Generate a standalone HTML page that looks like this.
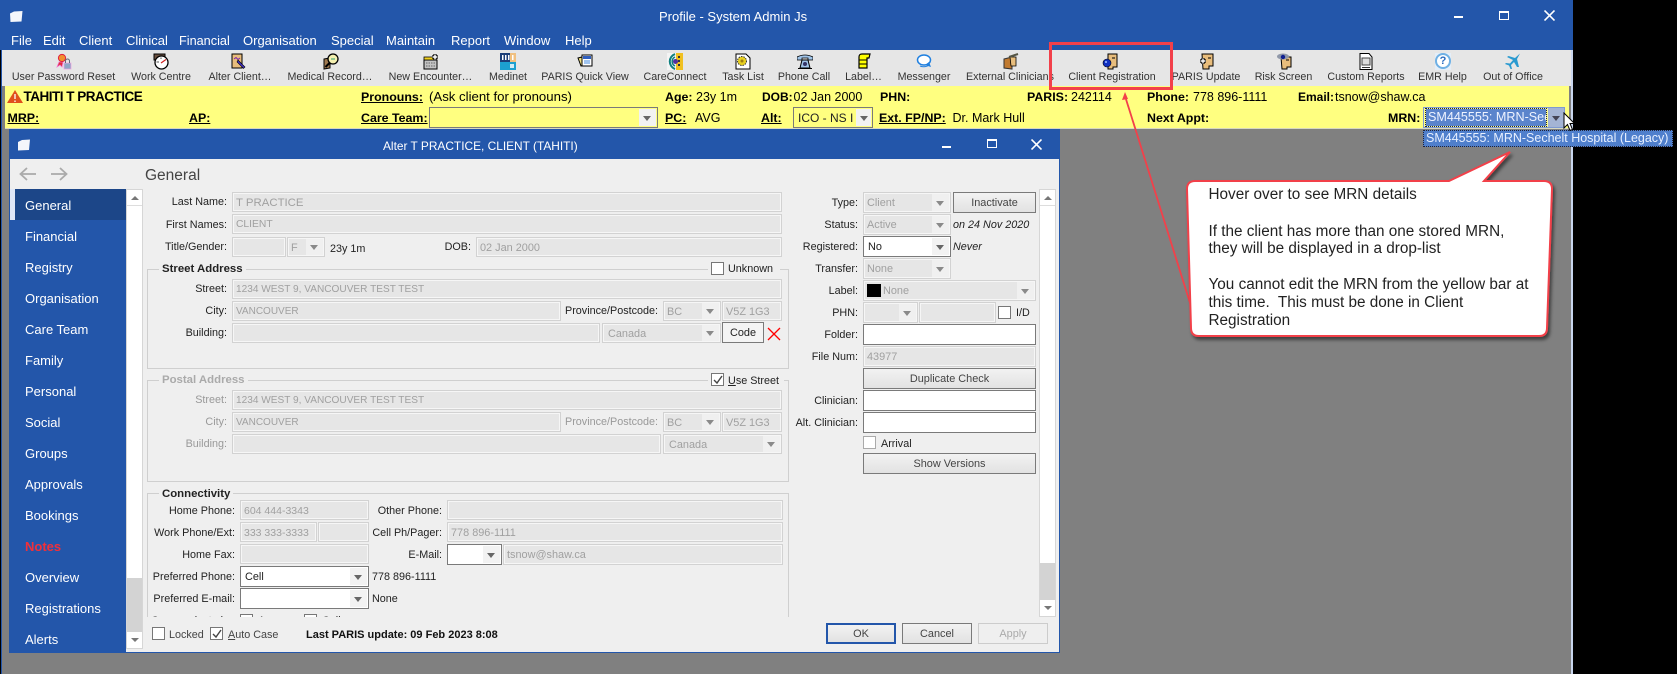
<!DOCTYPE html>
<html><head><meta charset="utf-8"><title>Profile - System Admin Js</title>
<style>
html,body{margin:0;padding:0;background:#000}
body{position:relative;width:1677px;height:674px;overflow:hidden;font-family:"Liberation Sans",Arial,sans-serif;font-size:10.8px;color:#222}
div,span,svg,i{position:absolute;box-sizing:border-box}
.t{white-space:nowrap;line-height:14px;margin-top:1px}
.r{transform:translateX(-100%)}
.g{color:#999}
.m{color:#fff;font-size:13px;top:34px;margin-top:0}
.tb{font-size:10.7px;top:70px;color:#333;transform:translateX(-50%);margin-top:0}
.ic{width:16px;height:17px;top:53px}
.y{font-size:12.5px;color:#000;margin-top:0}
.yb{font-size:12.4px;font-weight:bold;color:#000;margin-top:0}
.u{text-decoration:underline}
.n{left:25px;color:#fff;font-size:13px}
.f{background:#e6e6e6;border:1px solid #d2d2d2;box-shadow:inset 0 0 0 1px #f6f6f6;color:#a0a0a0;line-height:20px;padding-left:3px;white-space:nowrap;overflow:hidden;font-size:10.9px}
.w{background:#fff;border:1px solid #7a7a7a;color:#222;line-height:20px;padding-left:4px;white-space:nowrap;overflow:hidden;font-size:10.9px}
i{right:1px;top:1px;bottom:1px;width:17px;background:#f0f0f0}
i:after{content:"";position:absolute;left:4px;top:50%;margin-top:-2px;border:4px solid transparent;border-top:5px solid #8a8a8a;border-bottom:0}
.w i{background:#f2f2f2}.w i:after{border-top-color:#666}
.gb{border:1px solid #cfcfcf;left:147px;width:642px}
.lg{background:#efefef;padding:0 3px;font-weight:bold;font-size:11.4px;left:159px;color:#222}
.cb{width:13px;height:13px;background:#fff;border:1px solid #777}
.btn{background:linear-gradient(#f2f2f2,#e2e2e2);border:1px solid #7a7a7a;text-align:center;color:#444;line-height:21px;font-size:10.9px}
.sb{background:#fff;border:1px solid #d6d6d6}
.up,.dn{left:0;right:0;height:16px;background:#fff;border-bottom:1px solid #ddd}
.up:after,.dn:after{content:"";position:absolute;left:4px;top:6px;border:4px solid transparent}
.up:after{border-bottom:4px solid #777;border-top:0}
.dn:after{border-top:4px solid #777;border-bottom:0}
.c{font-size:15.3px;color:#222;left:1208.500px;margin-top:0}
</style></head><body>

<!-- main window -->
<div style="left:1px;top:0;width:1572px;height:674px;background:#808080;border-left:1px solid #2356aa;border-right:2px solid #c9d6ee"></div>
<div style="left:0;top:0;width:1573px;height:50px;background:#2356aa"></div>
<svg style="left:9px;top:10px" width="15" height="13" viewBox="0 0 15 13"><path d="M1 3.500 L5 1.500 L13.500 1 L12.500 11.500 L1.500 12 Z" fill="#f4f6fb"/></svg>
<div class="t" style="left:659px;top:10px;color:#fff;font-size:13px;margin-top:0">Profile - System Admin Js</div>
<div style="left:1454px;top:16px;width:9px;height:2px;background:#fff"></div>
<div style="left:1499px;top:11px;width:10px;height:9px;border:1px solid #fff;border-top-width:2px"></div>
<svg style="left:1544px;top:10px" width="11" height="11" viewBox="0 0 11 11"><path d="M.5 .5 L10.500 10.500 M10.500 .5 L.5 10.500" stroke="#fff" stroke-width="1.600"/></svg>

<div class="t m" style="left:11px">File</div>
<div class="t m" style="left:43px">Edit</div>
<div class="t m" style="left:79px">Client</div>
<div class="t m" style="left:126px">Clinical</div>
<div class="t m" style="left:179px;font-size:12.700px">Financial</div>
<div class="t m" style="left:243px">Organisation</div>
<div class="t m" style="left:331px">Special</div>
<div class="t m" style="left:386px">Maintain</div>
<div class="t m" style="left:451px">Report</div>
<div class="t m" style="left:504px">Window</div>
<div class="t m" style="left:565px">Help</div>

<!-- toolbar -->
<div style="left:2px;top:50px;width:1569px;height:36px;background:#e6e6e6"></div>

<svg class="ic" style="left:56px" viewBox="0 0 16 17"><path d="M3 9 L1 14 L4 12 L6 14 L7 9Z" fill="#e0303a" stroke="#f070d0" stroke-width=".7"/><circle cx="6" cy="5" r="3.600" fill="#f09030" stroke="#e02040"/><rect x="8" y="10" width="7" height="6" fill="#8fa8c8" stroke="#f0a0e0" stroke-width=".7"/><path d="M9.500 10 V8 A2 2 0 0 1 13.500 8 V10" fill="none" stroke="#667"/></svg>
<svg class="ic" style="left:153px" viewBox="0 0 16 17"><rect x="1" y="1" width="11" height="6" fill="#6a5040" stroke="#000"/><circle cx="8.500" cy="9.500" r="6.500" fill="#fff" stroke="#000" stroke-width="1.300"/><path d="M8 10 L13 6.500" stroke="#d02020" stroke-width="1.200"/><path d="M3.500 9 H6 M8 4.500 V6" stroke="#555"/></svg>
<svg class="ic" style="left:231px" viewBox="0 0 16 17"><rect x="1" y="1" width="10" height="14" fill="#e8bd7c" stroke="#000"/><path d="M3 6 L5 4.500 L7 6.500 L9 5" fill="none" stroke="#7a20b0"/><path d="M7 7 L14 14 L12.500 15.500 L6 9Z" fill="#4030c0" stroke="#000" stroke-width=".6"/></svg>
<svg class="ic" style="left:323px" viewBox="0 0 16 17"><path d="M1 6 L7 5 L7 15 L1 16Z" fill="#a07a50" stroke="#000"/><circle cx="10" cy="6" r="5" fill="#f4f0b0" stroke="#000" stroke-width="1.300"/><path d="M6.500 10 L2.500 14" stroke="#000" stroke-width="2"/><path d="M8 6 H12" stroke="#30a070"/></svg>
<svg class="ic" style="left:423px" viewBox="0 0 16 17"><rect x="1" y="7" width="13" height="9" fill="#c4c4c4" stroke="#000"/><rect x="1" y="4" width="11" height="3" fill="#f0d020" stroke="#000" stroke-width=".8"/><path d="M12 1 V7 M9 4 H15" stroke="#000" stroke-width="3.200"/><path d="M12 1.500 V6.500 M9.500 4 H14.500" stroke="#fff" stroke-width="1.500"/><path d="M3 10 H12 M3 13 H12" stroke="#666" stroke-dasharray="1.500 1"/></svg>
<svg class="ic" style="left:500px" viewBox="0 0 16 17"><rect x="0" y="0" width="16" height="9" fill="#1c3e78"/><rect x="10" y="0" width="6" height="9" fill="#f0c080"/><rect x="2" y="2" width="1.500" height="5" fill="#fff"/><rect x="5" y="2" width="1.500" height="5" fill="#fff"/><rect x="8" y="2" width="1.500" height="5" fill="#fff"/><rect x="12" y="2" width="1.500" height="5" fill="#fff"/><rect x="0" y="9" width="16" height="8" fill="#1ca0d0"/><rect x="10" y="11" width="4" height="4" fill="#d0ecf6"/></svg>
<svg class="ic" style="left:577px" viewBox="0 0 16 17"><path d="M1 5 L4 13 L8 12 L5 4Z" fill="#f0e080" stroke="#000"/><rect x="5" y="2" width="10" height="11" fill="#fff" stroke="#000"/><rect x="6" y="3" width="8" height="3" fill="#3060c0"/><rect x="7" y="7" width="6" height="4" fill="#a0c4f0"/></svg>
<svg class="ic" style="left:667px" viewBox="0 0 16 17"><rect x="0" y="0" width="16" height="17" fill="#f4f4f4"/><rect x="9" y="0" width="7" height="17" fill="#f0c020"/><path d="M8 1 A8 8 0 0 0 8 16" fill="none" stroke="#108080" stroke-width="2"/><path d="M8 4 A5 5 0 0 0 8 13" fill="none" stroke="#108080" stroke-width="1.500"/><circle cx="8.500" cy="8.500" r="2.500" fill="#5030a0"/><path d="M12 3 V14" stroke="#334" stroke-width="2" stroke-dasharray="2 2"/></svg>
<svg class="ic" style="left:735px" viewBox="0 0 16 17"><path d="M1 1 H11 L15 5 V16 H1Z" fill="#fff" stroke="#000"/><circle cx="7" cy="8" r="4.500" fill="#e8d020" stroke="#333" stroke-dasharray="1.500 1"/><circle cx="7" cy="8" r="1.500" fill="#a08010"/></svg>
<svg class="ic" style="left:797px" viewBox="0 0 16 17"><path d="M0 4 Q8 0 16 4 V7 H11 V5 H5 V7 H0Z" fill="#a0c4e8" stroke="#000" stroke-width=".8"/><path d="M3 15 L5 7 H11 L13 15Z" fill="#a0c4e8" stroke="#000"/><circle cx="8" cy="11" r="2" fill="#336"/><path d="M1 15.500 H15" stroke="#000"/></svg>
<svg class="ic" style="left:856px" viewBox="0 0 16 17"><path d="M3 4 Q3 1 6 1 H14 L13 5 H11 V15 H3Z" fill="#ffff00" stroke="#000" stroke-width="1.200"/><path d="M3 7 H11 M3 11 H11" stroke="#000"/></svg>
<svg class="ic" style="left:916px" viewBox="0 0 16 17"><ellipse cx="8" cy="7" rx="6.500" ry="5" fill="#fff" stroke="#2080e0" stroke-width="1.500"/><path d="M9 12 L15 14 L13 9Z" fill="#2080e0"/><path d="M4 13 Q9 15 13 12" fill="none" stroke="#2080e0"/></svg>
<svg class="ic" style="left:1003px" viewBox="0 0 16 17"><path d="M1 6 L9 4 V16 L1 15Z" fill="#c07a30" stroke="#333"/><path d="M7 4 H13 V13 H8Z" fill="#e8bd7c" stroke="#000" stroke-width=".8"/><path d="M6 4 L15 1" stroke="#554" stroke-width="2"/></svg>
<svg class="ic" style="left:1102px" viewBox="0 0 16 17"><path d="M6 1 H15 V14 H11 V16 H6Z" fill="#e8bd7c" stroke="#000"/><circle cx="5" cy="10" r="4" fill="#1030c0" stroke="#000" stroke-width=".6"/><circle cx="4" cy="9" r="1" fill="#a0c0ff"/><path d="M10 5 H13" stroke="#000"/></svg>
<svg class="ic" style="left:1198px" viewBox="0 0 16 17"><path d="M4 1 H15 V13 H11 V16 H5Z" fill="#e8bd7c" stroke="#000"/><path d="M5 5 V11 M2 8 H8" stroke="#000" stroke-width="3.200"/><path d="M5 5.500 V10.500 M2.500 8 H7.500" stroke="#fff" stroke-width="1.400"/><path d="M10 5 H13" stroke="#000"/></svg>
<svg class="ic" style="left:1276px" viewBox="0 0 16 17"><path d="M5 4 H15 V14 H11 V16 H6Z" fill="#e8bd7c" stroke="#000"/><ellipse cx="7" cy="3.500" rx="6" ry="3" fill="#9098a8"/><circle cx="7" cy="4" r="2.200" fill="#102090"/><path d="M10 7 H13" stroke="#000"/></svg>
<svg class="ic" style="left:1358px" viewBox="0 0 16 17"><path d="M2 .5 H11 L14 4 V16.500 H2Z" fill="#fff" stroke="#000"/><rect x="4" y="5" width="8" height="7" fill="#ddd" stroke="#444"/><path d="M4 14.500 H12" stroke="#333"/></svg>
<div style="left:1435px;top:53px;width:16px;height:17px;background:#e4eef8"></div>
<div style="left:1435px;top:53px;width:16px;height:16px;background:#fff;border:2px solid #6fb0e4;border-radius:50%;color:#2a6cc0;font-weight:bold;font-size:11px;line-height:12px;text-align:center">?</div>
<svg class="ic" style="left:1505px" viewBox="0 0 16 17"><path d="M15 .5 L12 6 L14 14 L12 14 L9 9 L6 12 L7 16 L5.500 16 L4 12.500 L0 11 L1 10 L5 10.500 L8 7 L2 4 L3.500 3 L10 5 Z" fill="#2a9ad0"/></svg>

<div class="t tb" style="left:63.500px">User Password Reset</div>
<div class="t tb" style="left:161px">Work Centre</div>
<div class="t tb" style="left:240px">Alter Client…</div>
<div class="t tb" style="left:330px">Medical Record…</div>
<div class="t tb" style="left:430.500px">New Encounter…</div>
<div class="t tb" style="left:508px">Medinet</div>
<div class="t tb" style="left:585px">PARIS Quick View</div>
<div class="t tb" style="left:675px">CareConnect</div>
<div class="t tb" style="left:743px">Task List</div>
<div class="t tb" style="left:804px">Phone Call</div>
<div class="t tb" style="left:863.500px">Label…</div>
<div class="t tb" style="left:924px">Messenger</div>
<div class="t tb" style="left:966px;transform:none">External Clinicians</div>
<div class="t tb" style="left:1112px">Client Registration</div>
<div class="t tb" style="left:1206px">PARIS Update</div>
<div class="t tb" style="left:1283.500px">Risk Screen</div>
<div class="t tb" style="left:1366px">Custom Reports</div>
<div class="t tb" style="left:1442.500px">EMR Help</div>
<div class="t tb" style="left:1513px">Out of Office</div>

<!-- yellow bar -->
<div style="left:5px;top:86px;width:1564px;height:43px;background:#ffff80;border-bottom:1px solid #d8d8c0"></div>
<svg style="left:7px;top:90px" width="16" height="13" viewBox="0 0 16 13"><path d="M8 0 L16 13 H0Z" fill="#e0501c"/><path d="M8 4 V9 M8 10.500 V12" stroke="#fff" stroke-width="1.300"/></svg>
<div class="t" style="left:23.500px;top:89.500px;font-size:13.500px;font-weight:bold;color:#000;letter-spacing:-.5px;margin-top:0">TAHITI T PRACTICE</div>
<div class="t yb u" style="left:361px;top:90px">Pronouns:</div>
<div class="t y" style="left:429px;top:90px;font-size:13.200px">(Ask client for pronouns)</div>
<div class="t yb" style="left:665px;top:90px">Age:</div>
<div class="t y" style="left:696px;top:90px">23y 1m</div>
<div class="t yb" style="left:762px;top:90px;font-size:12px">DOB:</div>
<div class="t y" style="left:793.500px;top:90px">02 Jan 2000</div>
<div class="t yb" style="left:880px;top:90px">PHN:</div>
<div class="t yb" style="left:1027px;top:90px">PARIS:</div>
<div class="t y" style="left:1071px;top:90px">242114</div>
<div class="t yb" style="left:1147px;top:90px">Phone:</div>
<div class="t y" style="left:1193px;top:90px">778 896-1111</div>
<div class="t yb" style="left:1298px;top:90px;font-size:12px">Email:</div>
<div class="t y" style="left:1335px;top:90px">tsnow@shaw.ca</div>

<div class="t yb u" style="left:7.500px;top:111px">MRP:</div>
<div class="t yb u" style="left:189px;top:111px">AP:</div>
<div class="t yb u" style="left:361px;top:111px">Care Team:</div>
<div class="w" style="left:429px;top:107px;width:229px;height:21px;background:#ffff80"><i></i></div>
<div class="t yb u" style="left:665px;top:111px">PC:</div>
<div class="t y" style="left:695px;top:111px">AVG</div>
<div class="t yb u" style="left:761px;top:111px">Alt:</div>
<div class="w y" style="left:793px;top:107px;width:80px;height:21px;background:#ffff80;padding-left:4px;font-size:12px">ICO - NS I<i style="width:15px"></i></div>
<div class="t yb u" style="left:879px;top:111px">Ext. FP/NP:</div>
<div class="t y" style="left:952.500px;top:111px">Dr. Mark Hull</div>
<div class="t yb" style="left:1147px;top:111px">Next Appt:</div>
<div class="t yb" style="left:1388px;top:111px">MRN:</div>
<div style="left:1423px;top:107px;width:142px;height:21px;border:1px solid #7f9ad0;background:#fbfb90"></div>
<div class="t" style="left:1426px;top:109px;width:120px;height:17px;line-height:17px;background:#5a84cc;color:#eef3ff;font-size:12.600px;padding-left:2px;overflow:hidden;outline:1px dotted #223;margin-top:0">SM445555: MRN-Sec</div>
<div style="left:1548px;top:108px;width:16px;height:19px;background:#a4b4d4"><div style="left:4px;top:8px;border:4px solid transparent;border-top:5px solid #445;border-bottom:0"></div></div>
<div class="t" style="left:1423px;top:130px;width:250px;height:17px;line-height:16px;background:#4f7fcc;color:#e8f0ff;font-size:12.500px;padding-left:3px;outline:1px dotted #223;outline-offset:-1px;margin-top:0">SM445555: MRN-Sechelt Hospital (Legacy)</div>

<!-- dialog -->
<div style="left:5px;top:129px;width:4px;height:523px;background:#808080"></div>
<div style="left:9px;top:129px;width:1051px;height:524px;background:#efefef;border:1px solid #2356aa;border-top:0"></div>
<div style="left:9px;top:129px;width:1051px;height:30px;background:#2356aa"></div>
<svg style="left:17px;top:139px" width="14" height="12" viewBox="0 0 14 12"><path d="M1 3 L5 1 L13 .5 L12 11 L1 11.500Z" fill="#f4f6fb"/></svg>
<div class="t" style="left:383px;top:139px;color:#fff;font-size:11.900px;margin-top:0">Alter T PRACTICE, CLIENT (TAHITI)</div>
<div style="left:942px;top:146px;width:9px;height:2px;background:#fff"></div>
<div style="left:987px;top:139px;width:10px;height:9px;border:1px solid #fff;border-top-width:2px"></div>
<svg style="left:1031px;top:139px" width="11" height="11" viewBox="0 0 11 11"><path d="M.5 .5 L10.500 10.500 M10.500 .5 L.5 10.500" stroke="#fff" stroke-width="1.600"/></svg>

<svg style="left:19px;top:166px" width="50" height="16" viewBox="0 0 50 16"><path d="M1 8 H17 M8 2 L1.500 8 L8 14" fill="none" stroke="#aaa" stroke-width="1.800"/><path d="M32 8 H48 M41 2 L47.500 8 L41 14" fill="none" stroke="#aaa" stroke-width="1.800"/></svg>
<div class="t" style="left:145px;top:167px;font-size:15.500px;color:#444;line-height:15px">General</div>

<!-- sidebar -->
<div style="left:9px;top:189px;width:117px;height:463px;background:#2356aa"></div>
<div style="left:10px;top:189px;width:5px;height:31px;background:#dfe7f7"></div>
<div style="left:15px;top:189px;width:111px;height:31px;background:#1c4688"></div>
<div class="t n" style="top:198px">General</div>
<div class="t n" style="top:229px">Financial</div>
<div class="t n" style="top:260px">Registry</div>
<div class="t n" style="top:291px">Organisation</div>
<div class="t n" style="top:322px">Care Team</div>
<div class="t n" style="top:353px">Family</div>
<div class="t n" style="top:384px">Personal</div>
<div class="t n" style="top:415px">Social</div>
<div class="t n" style="top:446px">Groups</div>
<div class="t n" style="top:477px">Approvals</div>
<div class="t n" style="top:508px">Bookings</div>
<div class="t n" style="top:539px;color:#f0303a;font-weight:bold">Notes</div>
<div class="t n" style="top:570px">Overview</div>
<div class="t n" style="top:601px">Registrations</div>
<div class="t n" style="top:632px">Alerts</div>
<div class="sb" style="left:126px;top:189px;width:17px;height:460px"><div class="up"></div><div style="left:0;right:0;top:388px;height:55px;background:#d3d3d3"></div><div class="dn" style="bottom:0;border:0"></div></div>

<!-- general column -->
<div class="t r" style="left:227px;top:194px">Last Name:</div>
<div class="f" style="left:232px;top:192px;width:550px;height:20px;font-size:11.400px">T PRACTICE</div>
<div class="t r" style="left:227px;top:217px">First Names:</div>
<div class="f" style="left:232px;top:214px;width:550px;height:20px;font-size:10.300px">CLIENT</div>
<div class="t r" style="left:227px;top:239px">Title/Gender:</div>
<div class="f" style="left:232px;top:237px;width:54px;height:20px"></div>
<div class="f" style="left:287px;top:237px;width:38px;height:20px">F<i></i></div>
<div class="t" style="left:330px;top:241px">23y 1m</div>
<div class="t r" style="left:471px;top:239px">DOB:</div>
<div class="f" style="left:476px;top:237px;width:306px;height:20px">02 Jan 2000</div>

<div class="gb" style="top:269px;height:100px"></div>
<div class="t lg" style="top:261px">Street Address</div>
<div class="t" style="left:708px;top:261px;width:72px;height:14px;background:#efefef"></div>
<div class="cb" style="left:711px;top:262px"></div>
<div class="t" style="left:728px;top:261px">Unknown</div>
<div class="t r" style="left:227px;top:281px">Street:</div>
<div class="f" style="left:232px;top:279px;width:550px;height:20px;font-size:10.100px">1234 WEST 9, VANCOUVER TEST TEST</div>
<div class="t r" style="left:227px;top:303px">City:</div>
<div class="f" style="left:232px;top:301px;width:329px;height:20px;font-size:10px">VANCOUVER</div>
<div class="t" style="left:565px;top:303px">Province/Postcode:</div>
<div class="f" style="left:663px;top:301px;width:58px;height:20px">BC<i></i></div>
<div class="f" style="left:722px;top:301px;width:60px;height:20px">V5Z 1G3</div>
<div class="t r" style="left:227px;top:325px">Building:</div>
<div class="f" style="left:232px;top:323px;width:368px;height:20px"></div>
<div class="f" style="left:602px;top:323px;width:119px;height:20px;padding-left:5px">Canada<i></i></div>
<div class="btn" style="left:722px;top:322px;width:42px;height:21px;background:#f4f4f4;color:#222">Code</div>
<svg style="left:767px;top:327px" width="14" height="14" viewBox="0 0 14 14"><path d="M1 1 L13 13 M13 1 L1 13" stroke="#f00" stroke-width="1.300"/></svg>

<div class="gb" style="top:380px;height:102px"></div>
<div class="t lg" style="top:372px;color:#aaa">Postal Address</div>
<div class="t" style="left:708px;top:372px;width:76px;height:14px;background:#efefef"></div>
<div class="cb" style="left:711px;top:373px"><svg style="left:1px;top:1px" width="10" height="10" viewBox="0 0 10 10"><path d="M1 5 L4 8 L9 1" fill="none" stroke="#444" stroke-width="1.400"/></svg></div>
<div class="t" style="left:728px;top:373px"><span style="position:static;text-decoration:underline">U</span>se Street</div>
<div class="t r g" style="left:227px;top:392px">Street:</div>
<div class="f" style="left:232px;top:390px;width:550px;height:20px;font-size:10.100px">1234 WEST 9, VANCOUVER TEST TEST</div>
<div class="t r g" style="left:227px;top:414px">City:</div>
<div class="f" style="left:232px;top:412px;width:329px;height:20px;font-size:10px">VANCOUVER</div>
<div class="t g" style="left:565px;top:414px">Province/Postcode:</div>
<div class="f" style="left:663px;top:412px;width:58px;height:20px">BC<i></i></div>
<div class="f" style="left:722px;top:412px;width:60px;height:20px">V5Z 1G3</div>
<div class="t r g" style="left:227px;top:436px">Building:</div>
<div class="f" style="left:232px;top:434px;width:429px;height:20px"></div>
<div class="f" style="left:663px;top:434px;width:119px;height:20px;padding-left:5px">Canada<i></i></div>

<div class="gb" style="top:493px;height:140px"></div>
<div class="t lg" style="top:486px">Connectivity</div>
<div class="t r" style="left:235px;top:503px">Home Phone:</div>
<div class="f" style="left:240px;top:500px;width:129px;height:20px;font-size:10.500px">604 444-3343</div>
<div class="t r" style="left:442px;top:503px">Other Phone:</div>
<div class="f" style="left:447px;top:500px;width:336px;height:20px"></div>
<div class="t r" style="left:235px;top:525px">Work Phone/Ext:</div>
<div class="f" style="left:240px;top:522px;width:77px;height:20px;font-size:10.500px">333 333-3333</div>
<div class="f" style="left:318px;top:522px;width:51px;height:20px"></div>
<div class="t r" style="left:442px;top:525px">Cell Ph/Pager:</div>
<div class="f" style="left:447px;top:522px;width:336px;height:20px">778 896-1111</div>
<div class="t r" style="left:235px;top:547px">Home Fax:</div>
<div class="f" style="left:240px;top:544px;width:129px;height:20px"></div>
<div class="t r" style="left:442px;top:547px">E-Mail:</div>
<div class="w" style="left:447px;top:544px;width:55px;height:21px"><i></i></div>
<div class="f" style="left:503px;top:544px;width:280px;height:21px;padding-left:3px">tsnow@shaw.ca</div>
<div class="t r" style="left:235px;top:569px">Preferred Phone:</div>
<div class="w" style="left:240px;top:566px;width:129px;height:21px">Cell<i></i></div>
<div class="t" style="left:372px;top:569px">778 896-1111</div>
<div class="t r" style="left:235px;top:591px">Preferred E-mail:</div>
<div class="w" style="left:240px;top:588px;width:129px;height:21px"><i></i></div>
<div class="t" style="left:372px;top:591px">None</div>
<div class="t r" style="left:235px;top:613px">Communicate by:</div>
<div class="cb" style="left:240px;top:614px"></div>
<div class="t" style="left:258px;top:613px">Anyone</div>
<div class="cb" style="left:304px;top:614px"></div>
<div class="t" style="left:322px;top:613px">Call</div>

<!-- right column -->
<div class="t r" style="left:858px;top:195px">Type:</div>
<div class="f" style="left:863px;top:192px;width:88px;height:21px">Client<i></i></div>
<div class="btn" style="left:953px;top:192px;width:83px;height:21px">Inactivate</div>
<div class="t r" style="left:858px;top:217px">Status:</div>
<div class="f" style="left:863px;top:214px;width:88px;height:21px">Active<i></i></div>
<div class="t" style="left:953px;top:217px;font-style:italic">on 24 Nov 2020</div>
<div class="t r" style="left:858px;top:239px">Registered:</div>
<div class="w" style="left:863px;top:236px;width:88px;height:21px">No<i></i></div>
<div class="t" style="left:953px;top:239px;font-style:italic">Never</div>
<div class="t r" style="left:858px;top:261px">Transfer:</div>
<div class="f" style="left:863px;top:258px;width:88px;height:21px">None<i></i></div>
<div class="t r" style="left:858px;top:283px">Label:</div>
<div class="f" style="left:863px;top:280px;width:173px;height:21px;padding-left:19px">None<i></i></div>
<div style="left:867px;top:284px;width:14px;height:13px;background:#000"></div>
<div class="t r" style="left:858px;top:305px">PHN:</div>
<div class="f" style="left:863px;top:302px;width:55px;height:21px"><i></i></div>
<div class="f" style="left:919px;top:302px;width:77px;height:21px"></div>
<div class="cb" style="left:998px;top:306px"></div>
<div class="t" style="left:1016px;top:305px">I/D</div>
<div class="t r" style="left:858px;top:327px">Folder:</div>
<div class="w" style="left:863px;top:324px;width:173px;height:21px"></div>
<div class="t r" style="left:858px;top:349px">File Num:</div>
<div class="f" style="left:863px;top:346px;width:173px;height:21px;padding-left:3px">43977</div>
<div class="btn" style="left:863px;top:368px;width:173px;height:21px">Duplicate Check</div>
<div class="t r" style="left:858px;top:393px">Clinician:</div>
<div class="w" style="left:863px;top:390px;width:173px;height:21px"></div>
<div class="t r" style="left:858px;top:415px">Alt. Clinician:</div>
<div class="w" style="left:863px;top:412px;width:173px;height:21px"></div>
<div class="cb" style="left:863px;top:436px;border-color:#aaa"></div>
<div class="t" style="left:881px;top:436px">Arrival</div>
<div class="btn" style="left:863px;top:453px;width:173px;height:21px">Show Versions</div>

<div class="sb" style="left:1039px;top:189px;width:17px;height:428px"><div class="up"></div><div style="left:0;right:0;top:373px;height:38px;background:#d3d3d3"></div><div class="dn" style="bottom:0;border:0"></div></div>

<!-- bottom bar -->
<div style="left:143px;top:617px;width:915px;height:35px;background:#efefef"></div>
<div class="cb" style="left:152px;top:627px"></div>
<div class="t" style="left:169px;top:627px;color:#444">Locked</div>
<div class="cb" style="left:210px;top:627px"><svg style="left:1px;top:1px" width="10" height="10" viewBox="0 0 10 10"><path d="M1 5 L4 8 L9 1" fill="none" stroke="#444" stroke-width="1.400"/></svg></div>
<div class="t" style="left:228px;top:627px;color:#444"><span style="position:static;text-decoration:underline">A</span>uto Case</div>
<div class="t" style="left:306px;top:627px;font-weight:bold;font-size:11px;color:#111">Last PARIS update: 09 Feb 2023 8:08</div>
<div class="btn" style="left:826px;top:623px;width:70px;height:21px;border:2px solid #2356aa;line-height:19px">OK</div>
<div class="btn" style="left:902px;top:623px;width:70px;height:21px">Cancel</div>
<div class="btn" style="left:978px;top:623px;width:70px;height:21px;border-color:#ccc;color:#aaa;background:#efefef">Apply</div>

<!-- annotations -->
<svg style="left:0;top:0" width="1677" height="674" viewBox="0 0 1677 674">
<defs><filter id="s" x="-5%" y="-5%" width="110%" height="115%"><feDropShadow dx="2" dy="3" stdDeviation="1.500" flood-color="#000" flood-opacity=".5"/></filter></defs>
<rect x="1050.500" y="43.500" width="121" height="45" fill="none" stroke="#f2404a" stroke-width="3"/>
<path d="M1125 92 L1122 100 L1128 99Z" fill="#f2404a"/>
<path d="M1125 96 L1191 306" stroke="#f2404a" stroke-width="1.800" fill="none"/>
<path d="M1195 181 H1449 L1510 152 L1484 181 H1544 Q1552 181 1552 189 L1547 328 Q1547 336 1539 336 H1199 Q1191 336 1191 328 L1187 189 Q1187 181 1195 181Z" fill="#fff" stroke="#f2404a" stroke-width="2" filter="url(#s)"/>
</svg>
<div class="t c" style="top:188px">Hover over to see MRN details</div>
<div class="t c" style="top:225px">If the client has more than one stored MRN,</div>
<div class="t c" style="top:242px">they will be displayed in a drop-list</div>
<div class="t c" style="top:278px">You cannot edit the MRN from the yellow bar at</div>
<div class="t c" style="top:296px">this time.&nbsp; This must be done in Client</div>
<div class="t c" style="top:314px">Registration</div>
<svg style="left:1563px;top:112px" width="12" height="20" viewBox="0 0 12 20"><path d="M1 1 V16 L4.500 12.500 L7 18.500 L9.500 17.500 L7 11.500 L11.500 11.500Z" fill="#fff" stroke="#000"/></svg>

</body></html>
